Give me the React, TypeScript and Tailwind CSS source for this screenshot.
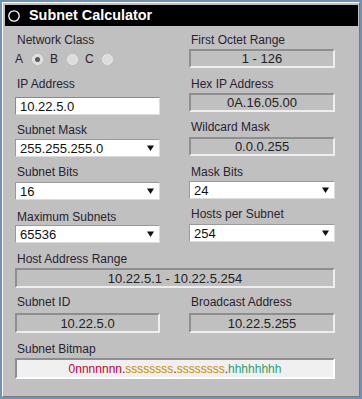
import React from "react"

const font = "font-['Liberation_Sans',Arial,sans-serif]"

function Label({ children, className = "" }: { children: React.ReactNode; className?: string }) {
  return <div className={`h-[14px] pl-[2px] text-[12px] leading-[14px] text-[#2a2230] ${className}`}>{children}</div>
}

function ReadBox({ value, className = "" }: { value: React.ReactNode; className?: string }) {
  return (
    <div
      className={`flex items-center justify-center border-2 border-t-[#8e8e8e] border-l-[#8e8e8e] border-b-[#eeeeee] border-r-[#eeeeee] bg-[#c0c0c0] text-[13px] leading-none text-[#222] ${className}`}
    >
      {value}
    </div>
  )
}

function Select({ value, className = "" }: { value: string; className?: string }) {
  return (
    <div
      className={`flex h-[18px] items-center justify-between border border-t-[#9a9a9a] border-l-[#9a9a9a] border-b-[#dcdcdc] border-r-[#dcdcdc] bg-white pl-[4px] pr-[5px] text-[13px] leading-none text-[#111] ${className}`}
    >
      <span>{value}</span>
      <svg width="7" height="6" viewBox="0 0 7 6">
        <path d="M0 0.5 H7 L3.5 6 Z" fill="#111" />
      </svg>
    </div>
  )
}

function Radio({ checked }: { checked?: boolean }) {
  return (
    <span className="flex h-[11px] w-[11px] items-center justify-center rounded-full border border-[#e8e8e8] bg-[#dddddd]">
      {checked && <span className="h-[5px] w-[5px] rounded-full bg-[#5a5a5a]" />}
    </span>
  )
}

export default function App() {
  return (
    <div className={`h-[399px] w-[362px] bg-[#7191b9] pl-[2px] pt-[2px] ${font}`}>
      <div className="h-[395px] w-[358px] border border-t-white border-l-white border-b-[#7a7a7a] border-r-[#7a7a7a] bg-[#c0c0c0] pl-[2px] pr-[1px] pt-[2px]">
        <div className="flex h-[21px] items-center bg-black pl-[3px]">
          <svg width="12" height="12" viewBox="0 0 12 12">
            <circle cx="6" cy="6" r="5.2" fill="none" stroke="#fff" strokeWidth="1.3" />
          </svg>
          <span className="ml-[9px] text-[14.4px] font-bold leading-none text-white">Subnet Calculator</span>
        </div>

        <div className="pl-[10px]">
          <div className="flex gap-[29px]">
            {/* left column */}
            <div className="flex w-[145px] flex-col">
              <Label className="mt-[7px]">Network Class</Label>
              <div className="mt-[6px] flex h-[12px] items-center text-[12px] leading-none text-[#2a2230]">
                <span>A</span>
                <span className="ml-[9px]"><Radio checked /></span>
                <span className="ml-[7px]">B</span>
                <span className="ml-[9px]"><Radio /></span>
                <span className="ml-[7px]">C</span>
                <span className="ml-[8px]"><Radio /></span>
              </div>
              <Label className="mt-[12px]">IP Address</Label>
              <div className="mt-[6px] flex h-[18px] items-center border border-t-[#8a8a8a] border-l-[#8a8a8a] border-b-[#dcdcdc] border-r-[#dcdcdc] bg-white pl-[4px] text-[13px] leading-none text-[#111]">
                10.22.5.0
              </div>
              <Label className="mt-[8px]">Subnet Mask</Label>
              <Select className="mt-[2px]" value="255.255.255.0" />
              <Label className="mt-[8px]">Subnet Bits</Label>
              <Select className="mt-[3px]" value="16" />
              <Label className="mt-[10px]">Maximum Subnets</Label>
              <Select className="mt-[1px]" value="65536" />
            </div>

            {/* right column */}
            <div className="flex w-[146px] flex-col">
              <Label className="mt-[7px]">First Octet Range</Label>
              <ReadBox className="mt-[2px] h-[19px]" value="1 - 126" />
              <Label className="mt-[9px]">Hex IP Address</Label>
              <ReadBox className="mt-[2px] h-[19px]" value="0A.16.05.00" />
              <Label className="mt-[8px]">Wildcard Mask</Label>
              <ReadBox className="mt-[3px] h-[19px]" value="0.0.0.255" />
              <Label className="mt-[9px]">Mask Bits</Label>
              <Select className="mt-[2px]" value="24" />
              <Label className="mt-[8px]">Hosts per Subnet</Label>
              <Select className="mt-[3px]" value="254" />
            </div>
          </div>

          <div className="w-[320px]">
            <Label className="mt-[9px]">Host Address Range</Label>
            <ReadBox className="mt-[2px] h-[20px]" value="10.22.5.1 - 10.22.5.254" />
          </div>

          <div className="flex gap-[29px]">
            <div className="flex w-[145px] flex-col">
              <Label className="mt-[7px]">Subnet ID</Label>
              <ReadBox className="mt-[4px] h-[20px]" value="10.22.5.0" />
            </div>
            <div className="flex w-[146px] flex-col">
              <Label className="mt-[7px]">Broadcast Address</Label>
              <ReadBox className="mt-[4px] h-[20px]" value="10.22.5.255" />
            </div>
          </div>

          <div className="w-[320px]">
            <Label className="mt-[9px]">Subnet Bitmap</Label>
            <div className="mt-[2px] flex h-[21px] items-center justify-center border-2 border-t-[#8e8e8e] border-l-[#8e8e8e] border-b-white border-r-white bg-[#f0f0f0] text-[12px] leading-none">
              <span className="text-[#c8003a]">0nnnnnnn</span>
              <span className="text-[#333]">.</span>
              <span className="text-[#c98a00]">ssssssss</span>
              <span className="text-[#333]">.</span>
              <span className="text-[#c98a00]">ssssssss</span>
              <span className="text-[#333]">.</span>
              <span className="text-[#2f9e70]">hhhhhhhh</span>
            </div>
          </div>
        </div>
      </div>
    </div>
  )
}
